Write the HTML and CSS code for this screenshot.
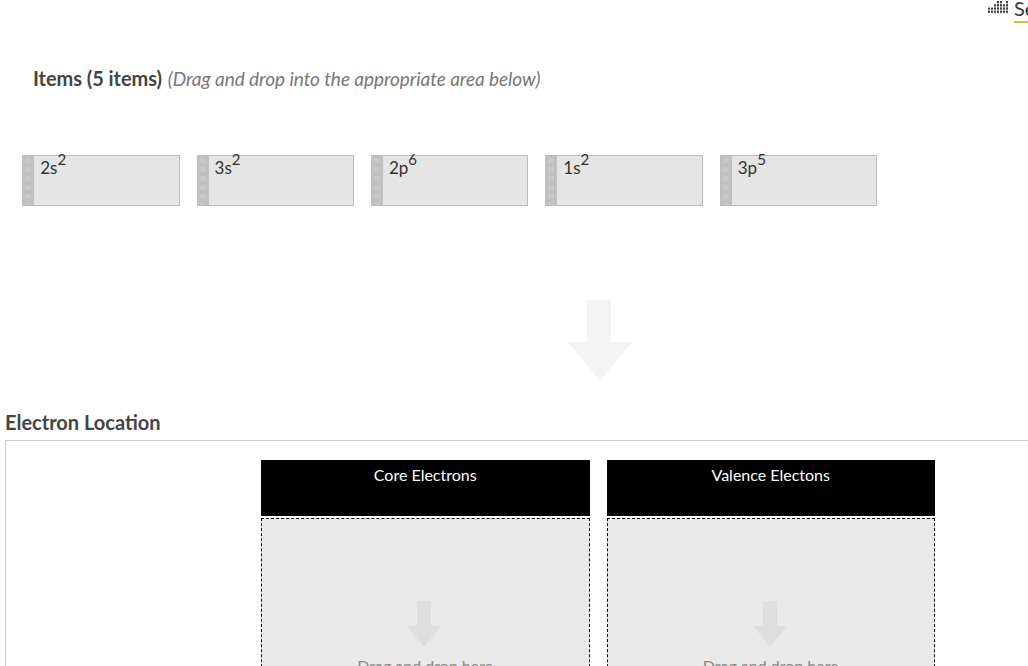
FILE: index.html
```html
<!DOCTYPE html>
<html lang="en">
<head>
<meta charset="utf-8">
<title>Electron Location</title>
<link rel="stylesheet" href="styles.css">
</head>
<body>
<div class="page">
  <div class="topbar">
    <svg class="bars-icon" width="21" height="13" viewBox="0 0 21 13" aria-hidden="true">
      <defs>
        <pattern id="dots" width="3" height="3.2" patternUnits="userSpaceOnUse"><rect width="2" height="2.2" fill="#3a3a3a"/></pattern>
      </defs>
      <rect x="0" y="6.4" width="2" height="6.6" fill="url(#dots)"/>
      <rect x="3" y="6.4" width="2" height="6.6" fill="url(#dots)"/>
      <rect x="6" y="3.2" width="2" height="9.8" fill="url(#dots)"/>
      <rect x="9" y="0" width="2" height="13" fill="url(#dots)"/>
      <rect x="12" y="0" width="2" height="13" fill="url(#dots)"/>
      <rect x="15" y="3.2" width="2" height="9.8" fill="url(#dots)"/>
      <rect x="18" y="0" width="2" height="13" fill="url(#dots)"/>
    </svg>
    <span class="tab">Se</span>
  </div>

  <h2 class="items-title">Items (5 items) <em>(Drag and drop into the appropriate area below)</em></h2>

  <div class="cards">
    <div class="card"><span class="grip"></span><span class="label">2s<sup>2</sup></span></div>
    <div class="card"><span class="grip"></span><span class="label">3s<sup>2</sup></span></div>
    <div class="card"><span class="grip"></span><span class="label">2p<sup>6</sup></span></div>
    <div class="card"><span class="grip"></span><span class="label">1s<sup>2</sup></span></div>
    <div class="card"><span class="grip"></span><span class="label">3p<sup>5</sup></span></div>
  </div>

  <div class="big-arrow">
    <svg width="64" height="81" viewBox="0 0 64 81" aria-hidden="true"><path d="M19 0H43V42H64L32 81L0 42H19Z" fill="#f3f3f3"/></svg>
  </div>

  <h3 class="section-title">Electron Location</h3>
  <div class="panel">
    <div class="col">
      <div class="col-head">Core Electrons</div>
      <div class="drop">
        <svg width="34" height="46" viewBox="0 0 34 46" aria-hidden="true"><path d="M10 0H24V25H34L17 46L0 25H10Z" fill="#dedede"/></svg>
        <span>Drag and drop here</span>
      </div>
    </div>
    <div class="col">
      <div class="col-head">Valence Electons</div>
      <div class="drop">
        <svg width="34" height="46" viewBox="0 0 34 46" aria-hidden="true"><path d="M10 0H24V25H34L17 46L0 25H10Z" fill="#dedede"/></svg>
        <span>Drag and drop here</span>
      </div>
    </div>
  </div>
</div>
</body>
</html>
```

FILE: styles.css
```css
* { box-sizing: border-box; }
html, body { margin: 0; padding: 0; height: 666px; overflow: hidden; background: #fff; }
body { font-family: Lato, "Open Sans", sans-serif; color: #333; }
.page { width: 1028px; height: 666px; overflow: hidden; }

.topbar { display: flex; justify-content: flex-end; align-items: flex-start; height: 23px; width: 1028px; overflow: hidden; }
.bars-icon { flex: none; margin-top: 1px; margin-right: 5px; }
.tab { flex: none; width: 14px; height: 23px; overflow: hidden; font-size: 20px; line-height: 17px; color: #333; border-bottom: 2px solid #e0b441; white-space: nowrap; }

.items-title { margin: 42px 0 0 33px; font-size: 20px; line-height: 27px; font-weight: 700; letter-spacing: -0.05px; color: #444; }
.items-title em { font-size: 19px; font-weight: 400; letter-spacing: -0.05px; color: #777; margin-left: 1px; }

.cards { display: flex; gap: 17px; margin: 63px 0 0 22.2px; }
.card { display: flex; flex: none; width: 157.4px; height: 51px; background: #e5e5e5; border: 1px solid #bbb; border-left: 0; }
.grip { flex: none; width: 12px; background-color: #c0c0c0; background-image: repeating-linear-gradient(to bottom, #c8c8c8 0 5px, transparent 5px 9px); background-size: 6px 100%; background-position: 3px 2px; background-repeat: no-repeat; }
.label { padding: 0 0 0 6px; font-size: 17px; line-height: 24px; color: #333; }
.label sup { font-size: 15px; line-height: 0; vertical-align: 9px; }

.big-arrow { display: flex; margin: 94px 0 0 568px; height: 81px; }

.section-title { margin: 28px 0 0 5px; font-size: 20px; line-height: 27px; font-weight: 700; letter-spacing: 0; color: #444; }

.panel { display: flex; gap: 17px; width: 1100px; height: 300px; margin: 4px 0 0 5px; padding: 19px 0 0 255px; border: 1px solid #ccc; }
.col { flex: none; width: 328.5px; }
.col-head { height: 56px; background: #000; color: #fff; font-size: 16px; line-height: 20px; text-align: center; padding-top: 5px; }
.drop { display: flex; flex-direction: column; align-items: center; height: 220px; margin-top: 2px; padding-top: 82px; background: #e9e9e9; border: 1px dashed #000; }
.drop svg { margin-left: -2px; }
.drop span { margin-top: 9px; font-size: 16px; line-height: 20px; color: #888; }
```
